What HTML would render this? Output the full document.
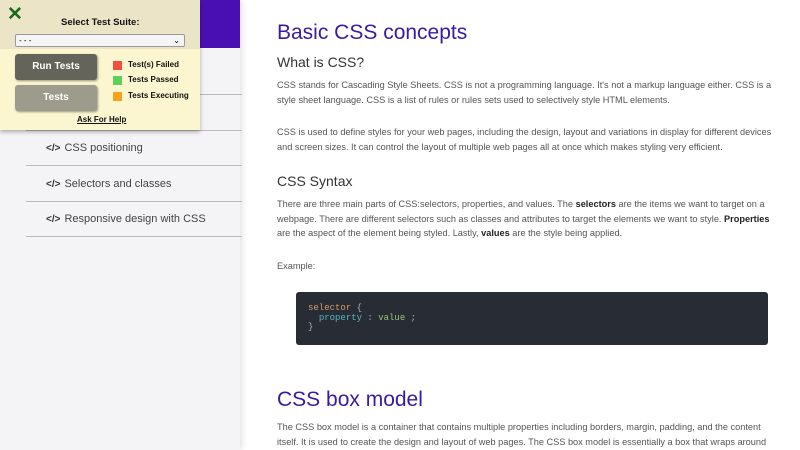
<!DOCTYPE html>
<html><head><style>
*{margin:0;padding:0;box-sizing:border-box}
body{width:800px;height:450px;overflow:hidden;background:#fff;font-family:"Liberation Sans",sans-serif;position:relative}
.a{position:absolute;white-space:nowrap}
.p{font-size:9.2px;color:#555;line-height:15px}
.h1{color:#3a1aa0;font-size:21px}
.h3{color:#333;font-size:14px}
#side{position:absolute;left:0;top:0;width:240px;height:450px;background:#f4f3f6;box-shadow:2px 0 6px rgba(0,0,0,.12)}
#hdr{position:absolute;left:0;top:0;width:240px;height:48px;background:#4a0fb3}
.nav{position:absolute;left:26px;width:216px;border-bottom:1px solid #bbb;font-size:11px;color:#444;height:36px;line-height:36px;padding-left:20px}
.nav b{font-size:10px;color:#333;margin-right:4px}
#ov{position:absolute;left:0;top:0;width:200px;height:130px;background:#fbf6cf;box-shadow:0 2px 4px rgba(0,0,0,.3)}
#ovt{position:absolute;left:0;top:0;width:200px;height:49px;background:#ece4c6}
.btn{position:absolute;left:15px;width:82px;height:26px;border-radius:3px;color:#fff;font-weight:bold;font-size:10px;text-align:center;line-height:26px;box-shadow:1px 1px 2px rgba(0,0,0,.4)}
.lg{position:absolute;left:113px;font-size:8px;font-weight:bold;color:#111}
.lg i{position:absolute;left:0;top:1px;width:9px;height:9px}
.lg span{position:absolute;left:15px;white-space:nowrap}
</style></head><body>
<div id="side">
<div id="hdr"><div class="a" style="left:14px;top:13px;color:#c9b7f0;font-size:17px">◘ CSS Documentation</div></div>
<div class="nav" style="top:59px"><b>&lt;/&gt;</b>CSS concepts</div>
<div class="nav" style="top:95px"><b>&lt;/&gt;</b>CSS box model</div>
<div class="nav" style="top:130px"><b>&lt;/&gt;</b>CSS positioning</div>
<div class="nav" style="top:166px"><b>&lt;/&gt;</b>Selectors and classes</div>
<div class="nav" style="top:201px"><b>&lt;/&gt;</b>Responsive design with CSS</div>
</div>
<div id="ov"><div id="ovt"></div>
<div class="a" style="left:7px;top:3px;color:#1a6a1a;font-size:19px;font-weight:bold">✕</div>
<div class="a" style="left:61px;top:17px;font-size:9.5px;font-weight:bold;color:#111">Select Test Suite:</div>
<div style="position:absolute;left:15px;top:34px;width:170px;height:13px;background:#f4f4f4;border:1px solid #999;border-radius:2px;font-size:8px;line-height:11px;padding-left:3px">- - -<span style="position:absolute;right:4px;font-size:8px">⌄</span></div>
<div class="btn" style="top:54px;background:#65645a">Run Tests</div>
<div class="btn" style="top:85px;background:#9d9c8c">Tests</div>
<div class="lg" style="top:60px"><i style="background:#f44e3f"></i><span>Test(s) Failed</span></div>
<div class="lg" style="top:75px"><i style="background:#5ccf5c"></i><span>Tests Passed</span></div>
<div class="lg" style="top:91px"><i style="background:#f7a21b"></i><span>Tests Executing</span></div>
<div class="a" style="left:77px;top:115px;font-size:8px;font-weight:bold;text-decoration:underline;color:#111">Ask For Help</div>
</div>

<div class="a h1" style="left:277px;top:21px">Basic CSS concepts</div>
<div class="a h3" style="left:277px;top:54px">What is CSS?</div>
<div class="a p" style="left:277px;top:78px">CSS stands for Cascading Style Sheets. CSS is not a programming language. It's not a markup language either. CSS is a<br>style sheet language. CSS is a list of rules or rules sets used to selectively style HTML elements.</div>
<div class="a p" style="left:277px;top:125px">CSS is used to define styles for your web pages, including the design, layout and variations in display for different devices<br>and screen sizes. It can control the layout of multiple web pages all at once which makes styling very efficient.</div>
<div class="a h3" style="left:277px;top:173px">CSS Syntax</div>
<div class="a p" style="left:277px;top:197px;line-height:14.5px">There are three main parts of CSS:selectors, properties, and values. The <b style="color:#222">selectors</b> are the items we want to target on a<br>webpage. There are different selectors such as classes and attributes to target the elements we want to style. <b style="color:#222">Properties</b><br>are the aspect of the element being styled. Lastly, <b style="color:#222">values</b> are the style being applied.</div>
<div class="a p" style="left:277px;top:259px">Example:</div>
<div style="position:absolute;left:296px;top:292px;width:472px;height:53px;background:#282c34;border-radius:3px;font-family:'Liberation Mono',monospace;font-size:9px;line-height:9.5px;padding:12px 0 0 12px;color:#abb2bf;white-space:pre"><span style="color:#d19a66">selector</span> {
  <span style="color:#56b6c2">property</span> : <span style="color:#98c379">value</span> ;
}</div>
<div class="a h1" style="left:277px;top:388px">CSS box model</div>
<div class="a p" style="left:277px;top:420px">The CSS box model is a container that contains multiple properties including borders, margin, padding, and the content<br>itself. It is used to create the design and layout of web pages. The CSS box model is essentially a box that wraps around</div>
</body></html>
